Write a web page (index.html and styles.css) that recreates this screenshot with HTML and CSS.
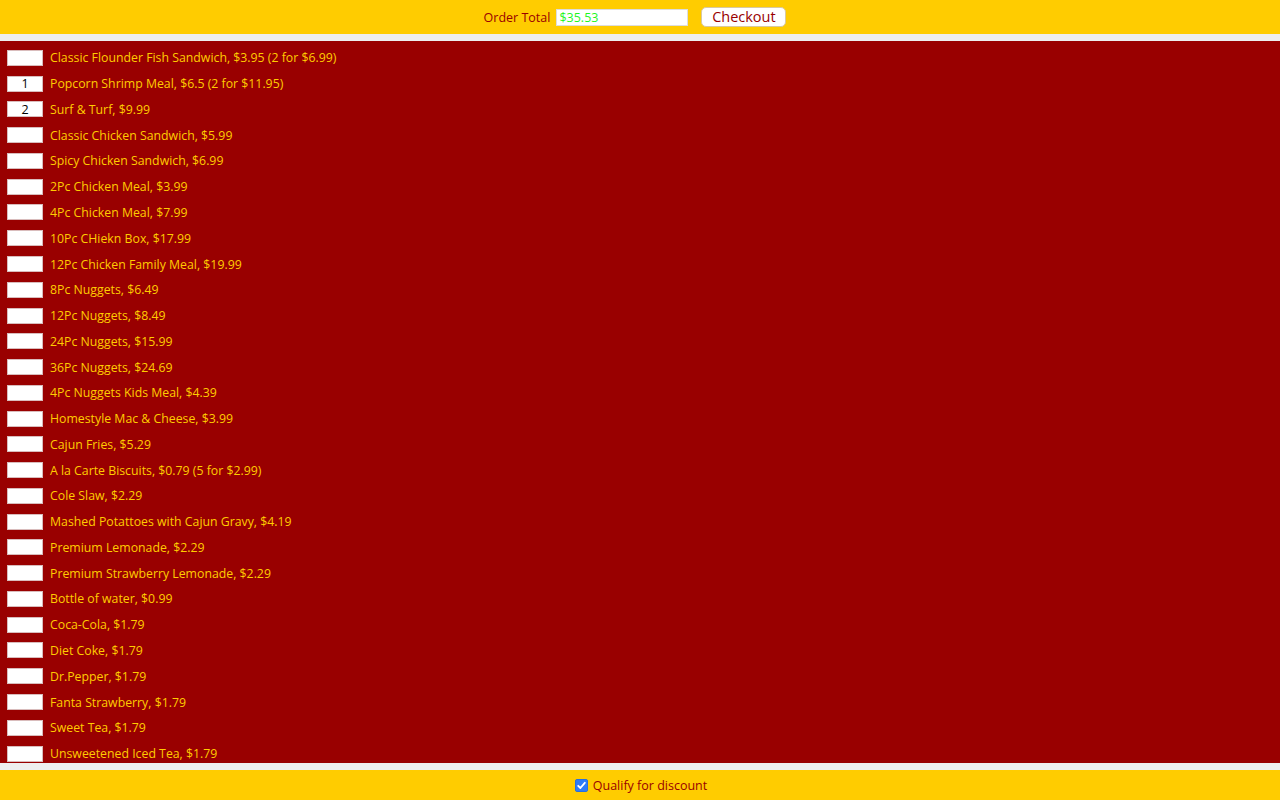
FILE: index.html
```html
<!DOCTYPE html>
<html>
<head>
<meta charset="utf-8">
<link rel="stylesheet" href="styles.css">
<title>Order</title>
</head>
<body>
<div class="app">
  <header class="topbar">
    <span class="total-label">Order Total</span>
    <input class="total-field" type="text" value="$35.53" readonly>
    <button class="checkout">Checkout</button>
  </header>
  <div class="sep"></div>
  <main class="menu">
    <div class="row"><input class="qty" type="text" value=""><span class="item">Classic Flounder Fish Sandwich, $3.95 (2 for $6.99)</span></div>
    <div class="row"><input class="qty" type="text" value="1"><span class="item">Popcorn Shrimp Meal, $6.5 (2 for $11.95)</span></div>
    <div class="row"><input class="qty" type="text" value="2"><span class="item">Surf &amp; Turf, $9.99</span></div>
    <div class="row"><input class="qty" type="text" value=""><span class="item">Classic Chicken Sandwich, $5.99</span></div>
    <div class="row"><input class="qty" type="text" value=""><span class="item">Spicy Chicken Sandwich, $6.99</span></div>
    <div class="row"><input class="qty" type="text" value=""><span class="item">2Pc Chicken Meal, $3.99</span></div>
    <div class="row"><input class="qty" type="text" value=""><span class="item">4Pc Chicken Meal, $7.99</span></div>
    <div class="row"><input class="qty" type="text" value=""><span class="item">10Pc CHiekn Box, $17.99</span></div>
    <div class="row"><input class="qty" type="text" value=""><span class="item">12Pc Chicken Family Meal, $19.99</span></div>
    <div class="row"><input class="qty" type="text" value=""><span class="item">8Pc Nuggets, $6.49</span></div>
    <div class="row"><input class="qty" type="text" value=""><span class="item">12Pc Nuggets, $8.49</span></div>
    <div class="row"><input class="qty" type="text" value=""><span class="item">24Pc Nuggets, $15.99</span></div>
    <div class="row"><input class="qty" type="text" value=""><span class="item">36Pc Nuggets, $24.69</span></div>
    <div class="row"><input class="qty" type="text" value=""><span class="item">4Pc Nuggets Kids Meal, $4.39</span></div>
    <div class="row"><input class="qty" type="text" value=""><span class="item">Homestyle Mac &amp; Cheese, $3.99</span></div>
    <div class="row"><input class="qty" type="text" value=""><span class="item">Cajun Fries, $5.29</span></div>
    <div class="row"><input class="qty" type="text" value=""><span class="item">A la Carte Biscuits, $0.79 (5 for $2.99)</span></div>
    <div class="row"><input class="qty" type="text" value=""><span class="item">Cole Slaw, $2.29</span></div>
    <div class="row"><input class="qty" type="text" value=""><span class="item">Mashed Potattoes with Cajun Gravy, $4.19</span></div>
    <div class="row"><input class="qty" type="text" value=""><span class="item">Premium Lemonade, $2.29</span></div>
    <div class="row"><input class="qty" type="text" value=""><span class="item">Premium Strawberry Lemonade, $2.29</span></div>
    <div class="row"><input class="qty" type="text" value=""><span class="item">Bottle of water, $0.99</span></div>
    <div class="row"><input class="qty" type="text" value=""><span class="item">Coca-Cola, $1.79</span></div>
    <div class="row"><input class="qty" type="text" value=""><span class="item">Diet Coke, $1.79</span></div>
    <div class="row"><input class="qty" type="text" value=""><span class="item">Dr.Pepper, $1.79</span></div>
    <div class="row"><input class="qty" type="text" value=""><span class="item">Fanta Strawberry, $1.79</span></div>
    <div class="row"><input class="qty" type="text" value=""><span class="item">Sweet Tea, $1.79</span></div>
    <div class="row"><input class="qty" type="text" value=""><span class="item">Unsweetened Iced Tea, $1.79</span></div>
  </main>
  <div class="sep"></div>
  <footer class="bottombar">
    <label class="discount">
      <span class="checkbox"><svg viewBox="0 0 13 13" width="13" height="13"><path d="M3.2 6.8 L5.4 9 L9.8 3.8" fill="none" stroke="#fff" stroke-width="1.8" stroke-linecap="round" stroke-linejoin="round"/></svg></span>
      <span class="discount-text">Qualify for discount</span>
    </label>
  </footer>
</div>
</body>
</html>
```

FILE: styles.css
```css
html, body {
  margin: 0;
  padding: 0;
  height: 100%;
}
body {
  font-family: "Open Sans", "DejaVu Sans", sans-serif;
  font-size: 12px;
  background: #ffcc00;
}
.app {
  display: flex;
  flex-direction: column;
  height: 800px;
  width: 1280px;
  overflow: hidden;
}
.topbar {
  height: 34px;
  flex: 0 0 34px;
  background: #ffcc00;
  display: flex;
  align-items: center;
  justify-content: center;
  padding-right: 10px;
}
.total-label {
  color: #990000;
  font-size: 12.5px;
  margin-right: 6px;
}
.total-field {
  width: 132px;
  height: 17px;
  box-sizing: border-box;
  border: 1px solid #ddd;
  background: #fff;
  color: #1ff51f;
  font-family: "Open Sans", "DejaVu Sans", sans-serif;
  font-size: 12.5px;
  padding: 0 2px;
  margin: 1px 0 0 0;
  outline: none;
}
.checkout {
  margin-left: 13px;
  width: 85px;
  height: 20px;
  box-sizing: border-box;
  background: #fff;
  border: 1px solid #d8c9a0;
  border-radius: 5px;
  color: #990000;
  font-family: "Open Sans", "DejaVu Sans", sans-serif;
  font-size: 14.5px;
  padding: 0;
  line-height: 18px;
}
.sep {
  flex: 0 0 7px;
  height: 7px;
  background: #eeeeee;
}
.menu {
  flex: 0 0 722px;
  height: 722px;
  background: #990000;
  display: grid;
  grid-template-rows: repeat(28, 25.78px);
  align-content: start;
  padding-top: 4px;
  box-sizing: border-box;
  overflow: hidden;
}
.row {
  display: flex;
  align-items: center;
  padding-left: 7px;
}
.qty {
  width: 36px;
  height: 16px;
  box-sizing: border-box;
  border: 1px solid #d9bcbc;
  background: #fff;
  color: #000;
  text-align: center;
  font-family: "Open Sans", "DejaVu Sans", sans-serif;
  font-size: 12.5px;
  padding: 0;
  margin: 0 7px 0 0;
  outline: none;
}
.item {
  color: #ffcc00;
  font-size: 12.3px;
  white-space: nowrap;
}
.bottombar {
  flex: 1 1 auto;
  background: #ffcc00;
  display: flex;
  align-items: center;
  justify-content: center;
  padding-left: 2px;
  padding-top: 1px;
}
.discount {
  display: flex;
  align-items: center;
  gap: 5px;
}
.checkbox {
  width: 13px;
  height: 13px;
  border-radius: 3px;
  background: #2e7cf6;
  display: flex;
  align-items: center;
  justify-content: center;
  box-shadow: inset 0 0 0 0.5px #1f63d0;
}
.checkbox svg {
  display: block;
}
.discount-text {
  color: #990000;
  font-size: 12.5px;
}
```
